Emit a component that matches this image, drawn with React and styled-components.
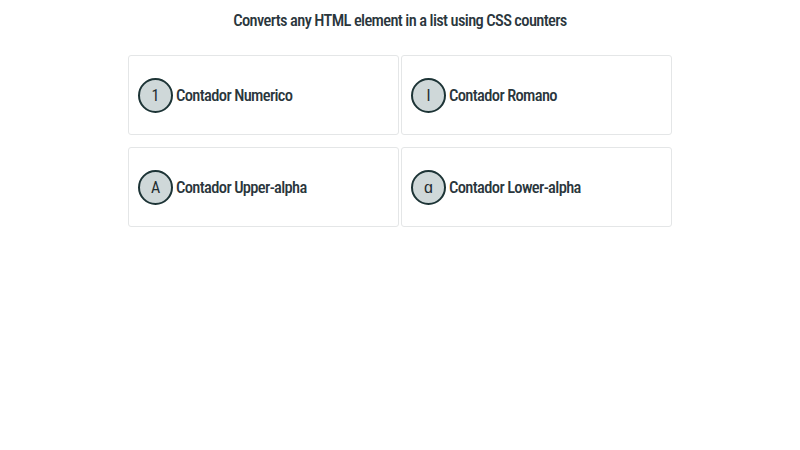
import styled, { createGlobalStyle } from "styled-components"

const GlobalStyle = createGlobalStyle`
  body {
    margin: 0;
    background: #ffffff;
    font-family: "Roboto Condensed", "Liberation Sans Narrow", Roboto, sans-serif;
    color: #263238;
  }
`

const items = [
  { mark: "1", label: "Contador Numerico" },
  { mark: "I", label: "Contador Romano" },
  { mark: "A", label: "Contador Upper-alpha" },
  { mark: "ɑ", label: "Contador Lower-alpha" },
]

export default function App() {
  return (
    <Page>
      <GlobalStyle />
      <Title>Converts any HTML element in a list using CSS counters</Title>
      <List>
        {items.map(item => (
          <Card key={item.label}>
            <Badge>{item.mark}</Badge>
            <Label>{item.label}</Label>
          </Card>
        ))}
      </List>
    </Page>
  )
}

const Page = styled.div`
  width: 800px;
  height: 450px;
  display: flex;
  flex-direction: column;
  align-items: center;
`

const Title = styled.h1`
  margin: 11px 0 0;
  font-size: 16.5px;
  font-weight: 500;
  letter-spacing: -0.65px;
  line-height: 20px;
  color: #2a363c;
`

const List = styled.div`
  margin-top: 24px;
  width: 544px;
  display: grid;
  grid-template-columns: 271px 271px;
  column-gap: 2px;
  row-gap: 12px;
`

const Card = styled.div`
  height: 80px;
  box-sizing: border-box;
  border: 1px solid #e4e6e7;
  border-radius: 3px;
  display: flex;
  align-items: center;
  padding-left: 9px;
  gap: 3px;
`

const Badge = styled.div`
  width: 35px;
  height: 35px;
  box-sizing: border-box;
  border-radius: 50%;
  border: 2px solid #1d3436;
  background: #cfd8d9;
  display: flex;
  align-items: center;
  justify-content: center;
  font-size: 16px;
  font-weight: 400;
  color: #1f2c30;
`

const Label = styled.span`
  font-size: 16.5px;
  font-weight: 500;
  letter-spacing: -0.65px;
  color: #2a363c;
`
